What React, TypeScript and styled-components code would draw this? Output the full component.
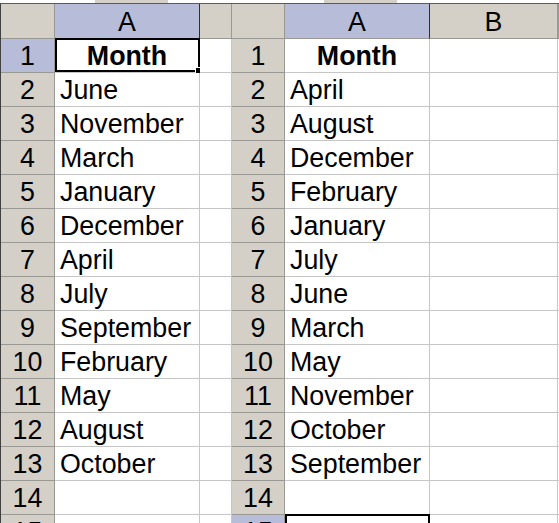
import React from "react";
import styled, { createGlobalStyle, css } from "styled-components";

const Global = createGlobalStyle`
  html, body { margin: 0; padding: 0; background: #ffffff; overflow: hidden; }
  body { font-family: "Liberation Sans", Arial, sans-serif; }
`;

const HEAD_GRAY = "#d4d0c8";
const HEAD_BLUE = "#b7bdd9";
const GRID = "#c6c6c6";
const HEAD_LINE = "#9a9893";

const Page = styled.div`
  width: 559px;
  height: 523px;
  overflow: hidden;
  display: flex;
  flex-direction: column;
`;

const TopStrip = styled.div`
  height: 3px;
  display: flex;
  border-bottom: 1px solid #5a5a5a;
`;

const StripPiece = styled.div<{ $w: number; $tab?: boolean }>`
  width: ${(p) => p.$w}px;
  flex: ${(p) => (p.$w === 0 ? 1 : "none")};
  background: ${(p) => (p.$tab ? HEAD_GRAY : "#ffffff")};
`;

const Sheets = styled.div`
  display: flex;
  flex: 1;
  min-height: 0;
`;

const Sheet = styled.div<{ $cols: string; $edge?: boolean }>`
  display: grid;
  grid-template-columns: ${(p) => p.$cols};
  grid-auto-rows: 34px;
  grid-template-rows: 35px;
  align-content: start;
  ${(p) =>
    p.$edge &&
    css`
      border-left: 1px solid #404040;
    `}
`;

const Cell = styled.div<{
  $kind: "corner" | "colhead" | "rowhead" | "data";
  $sel?: boolean;
  $bold?: boolean;
  $center?: boolean;
}>`
  position: relative;
  box-sizing: border-box;
  display: flex;
  align-items: center;
  font-size: 26.8px;
  line-height: 1;
  color: #000;
  white-space: nowrap;
  overflow: visible;
  border-right: 1px solid ${GRID};
  border-bottom: 1px solid ${GRID};
  padding: 2px 0 0 0;
  ${(p) =>
    (p.$kind === "corner" || p.$kind === "colhead") &&
    css`
      background: ${p.$sel ? HEAD_BLUE : HEAD_GRAY};
      justify-content: center;
      border-right-color: ${p.$sel ? "#2a2a4a" : HEAD_LINE};
      border-bottom-color: ${HEAD_LINE};
    `}
  ${(p) =>
    p.$kind === "rowhead" &&
    css`
      background: ${p.$sel ? HEAD_BLUE : HEAD_GRAY};
      justify-content: center;
      border-right-color: ${HEAD_LINE};
      border-bottom-color: ${HEAD_LINE};
    `}
  ${(p) =>
    p.$kind === "data" &&
    css`
      background: #ffffff;
      justify-content: ${p.$center ? "center" : "flex-start"};
      padding-left: ${p.$center ? 0 : 5}px;
      font-weight: ${p.$bold ? 700 : 400};
    `}
`;

const Selection = styled.div`
  position: absolute;
  left: 0;
  top: -1px;
  right: -1px;
  bottom: 0;
  border: 2px solid #000;
  pointer-events: none;
`;

const FillHandle = styled.div`
  position: absolute;
  right: -4px;
  bottom: -4px;
  width: 5px;
  height: 5px;
  background: #000;
  border: 1px solid #fff;
`;

type SheetSpec = {
  cols: string;
  colHeads: { label: string; sel?: boolean }[];
  values: string[];
  selRowIndex: number;
  edge?: boolean;
  handle?: boolean;
};

const leftValues = [
  "June",
  "November",
  "March",
  "January",
  "December",
  "April",
  "July",
  "September",
  "February",
  "May",
  "August",
  "October",
];

const rightValues = [
  "April",
  "August",
  "December",
  "February",
  "January",
  "July",
  "June",
  "March",
  "May",
  "November",
  "October",
  "September",
];

const ROWS = 15;

function SpreadSheet({ spec }: { spec: SheetSpec }) {
  const cells: React.ReactNode[] = [];
  cells.push(<Cell key="corner" $kind="corner" />);
  spec.colHeads.forEach((h, i) => {
    cells.push(
      <Cell key={`h${i}`} $kind="colhead" $sel={h.sel}>
        {h.label}
      </Cell>
    );
  });
  for (let r = 1; r <= ROWS; r++) {
    const sel = r === spec.selRowIndex;
    cells.push(
      <Cell key={`r${r}`} $kind="rowhead" $sel={sel}>
        {r}
      </Cell>
    );
    spec.colHeads.forEach((_, c) => {
      let text = "";
      if (c === 0) {
        if (r === 1) text = "Month";
        else if (r - 2 < spec.values.length) text = spec.values[r - 2];
      }
      cells.push(
        <Cell
          key={`c${r}-${c}`}
          $kind="data"
          $bold={r === 1 && c === 0}
          $center={r === 1 && c === 0}
        >
          {text}
          {sel && c === 0 && (
            <Selection>{spec.handle && <FillHandle />}</Selection>
          )}
        </Cell>
      );
    });
  }
  return (
    <Sheet $cols={spec.cols} $edge={spec.edge}>
      {cells}
    </Sheet>
  );
}

const leftSpec: SheetSpec = {
  cols: "54px 145px 32px",
  colHeads: [{ label: "A", sel: true }, { label: "" }],
  values: leftValues,
  selRowIndex: 1,
  edge: true,
  handle: true,
};

const rightSpec: SheetSpec = {
  cols: "53px 145px 128px 1px",
  colHeads: [{ label: "A", sel: true }, { label: "B" }, { label: "" }],
  values: rightValues,
  selRowIndex: 15,
};

export default function App() {
  return (
    <>
      <Global />
      <Page>
        <TopStrip>
          <StripPiece $w={95} />
          <StripPiece $w={73} $tab />
          <StripPiece $w={156} />
          <StripPiece $w={73} $tab />
          <StripPiece $w={0} />
        </TopStrip>
        <Sheets>
          <SpreadSheet spec={leftSpec} />
          <SpreadSheet spec={rightSpec} />
        </Sheets>
      </Page>
    </>
  );
}
